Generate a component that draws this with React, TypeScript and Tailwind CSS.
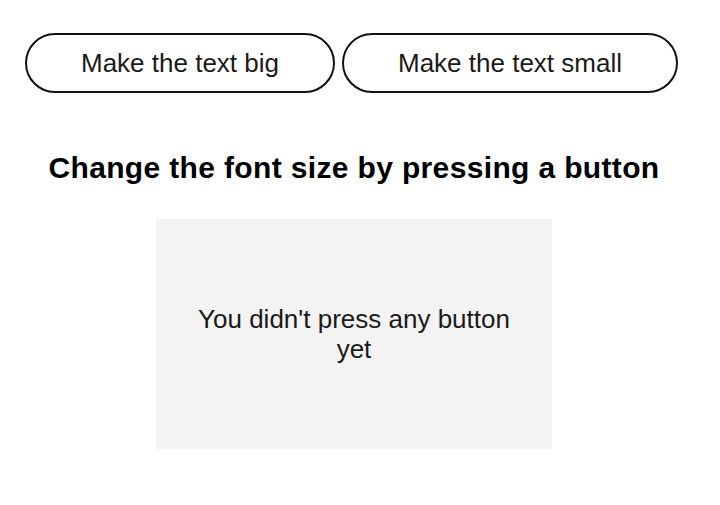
import { useState } from "react";

export default function App() {
  const [size, setSize] = useState<"none" | "big" | "small">("none");

  const message =
    size === "none"
      ? "You didn't press any button yet"
      : size === "big"
      ? "The text is big now"
      : "The text is small now";

  return (
    <div className="w-[708px] font-['Liberation_Sans',Arial,sans-serif] text-[#1a1a1a]">
      {/* Buttons */}
      <div className="flex gap-[7px] pl-[25px] pt-[33px]">
        <button
          onClick={() => setSize("big")}
          className="h-[60px] px-[54px] border-2 border-[#111] rounded-full text-[26px] leading-[30px] bg-white"
        >
          Make the text big
        </button>
        <button
          onClick={() => setSize("small")}
          className="h-[60px] px-[54px] border-2 border-[#111] rounded-full text-[26px] leading-[30px] bg-white"
        >
          Make the text small
        </button>
      </div>

      {/* Heading */}
      <h1 className="mt-[58px] text-center font-bold text-[30px] leading-[34px] tracking-[0.35px] text-black">
        Change the font size by pressing a button
      </h1>

      {/* Result box */}
      <div className="mt-[34px] mx-auto w-[396px] h-[230px] bg-[#f3f3f3] flex items-center justify-center px-[40px]">
        <p
          className={`text-center leading-[30px] ${
            size === "big" ? "text-[34px]" : size === "small" ? "text-[18px]" : "text-[26px]"
          }`}
        >
          {message}
        </p>
      </div>
    </div>
  );
}
